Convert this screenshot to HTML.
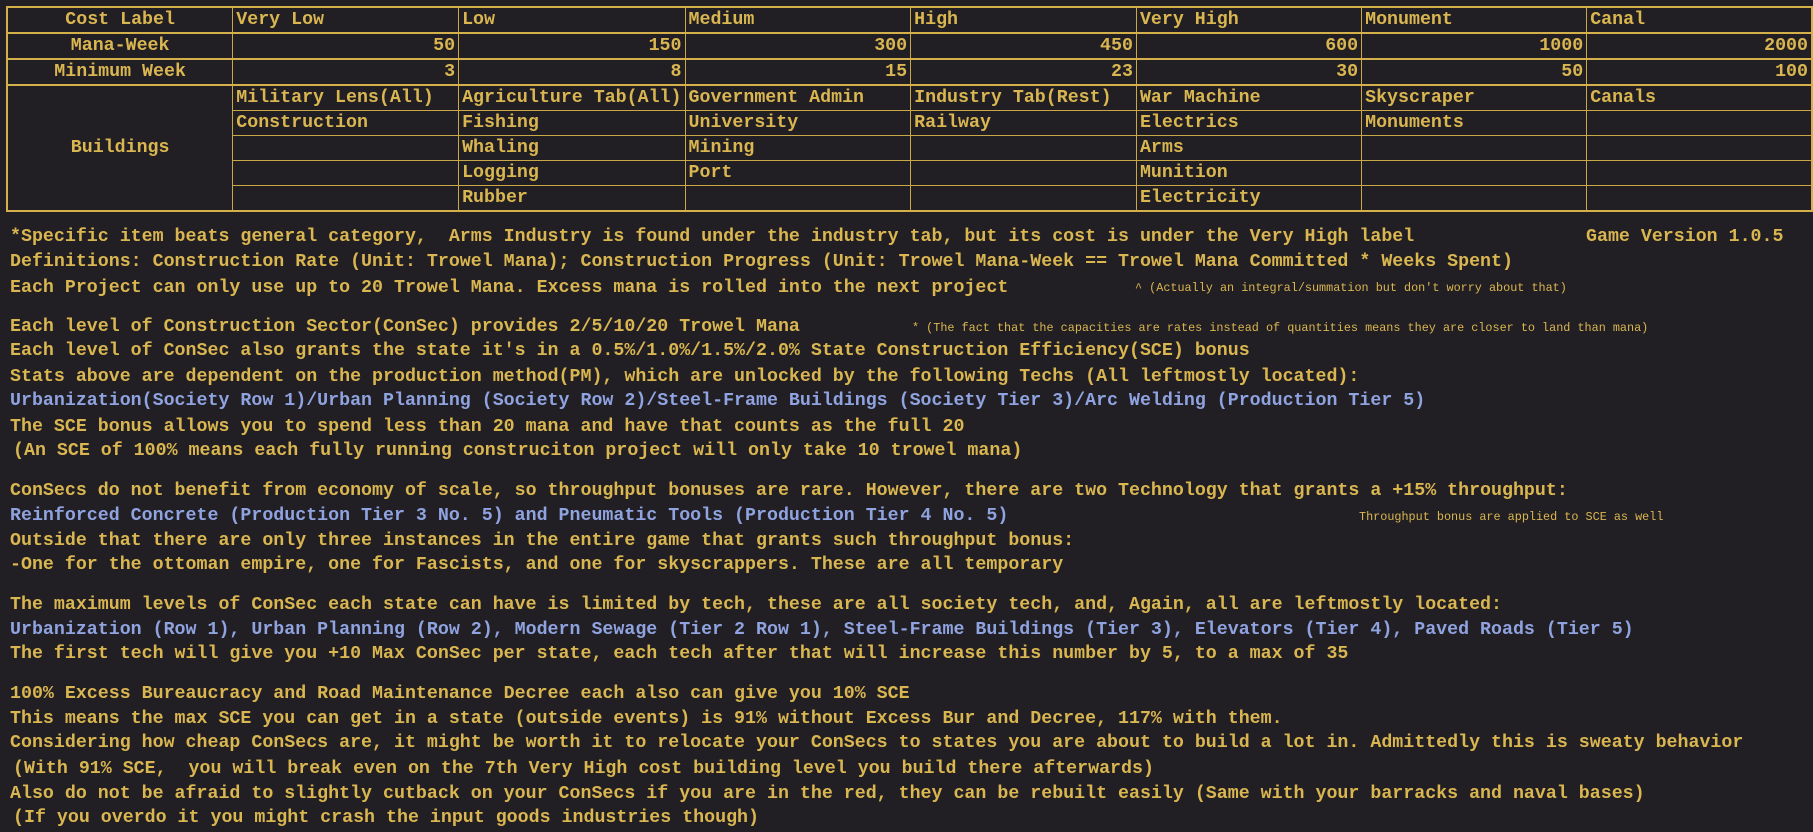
<!DOCTYPE html>
<html><head><meta charset="utf-8"><style>
html,body{margin:0;padding:0;background:#221f24;width:1813px;height:832px;overflow:hidden}
body{font-family:"Liberation Mono",monospace;font-weight:bold;color:#d9b650;font-size:18.3px;position:relative}
table{position:absolute;left:6px;top:6px;border-collapse:collapse;border:2px solid #d4b04a}
td{border:1px solid #c9a845;padding:0 3px;height:24px;line-height:22px;white-space:nowrap;width:219px;overflow:hidden}
tr.h td{border-bottom:2px solid #d4b04a;height:24px}
td.c{text-align:center}
td.r{text-align:right}
.l{position:absolute;left:10px;white-space:pre;line-height:25px}
.b{color:#8fa3e0}
.s{position:absolute;font-size:11.8px;font-weight:normal;white-space:pre;line-height:14px}
</style></head><body>
<table>
<tr class="h"><td class="c">Cost Label</td><td>Very Low</td><td>Low</td><td>Medium</td><td>High</td><td>Very High</td><td>Monument</td><td>Canal</td></tr>
<tr class="h"><td class="c">Mana-Week</td><td class="r">50</td><td class="r">150</td><td class="r">300</td><td class="r">450</td><td class="r">600</td><td class="r">1000</td><td class="r">2000</td></tr>
<tr class="h"><td class="c">Minimum Week</td><td class="r">3</td><td class="r">8</td><td class="r">15</td><td class="r">23</td><td class="r">30</td><td class="r">50</td><td class="r">100</td></tr>
<tr><td class="c" rowspan="5">Buildings</td><td>Military Lens(All)</td><td>Agriculture Tab(All)</td><td>Government Admin</td><td>Industry Tab(Rest)</td><td>War Machine</td><td>Skyscraper</td><td>Canals</td></tr>
<tr><td>Construction</td><td>Fishing</td><td>University</td><td>Railway</td><td>Electrics</td><td>Monuments</td><td></td></tr>
<tr><td></td><td>Whaling</td><td>Mining</td><td></td><td>Arms</td><td></td><td></td></tr>
<tr><td></td><td>Logging</td><td>Port</td><td></td><td>Munition</td><td></td><td></td></tr>
<tr><td></td><td>Rubber</td><td></td><td></td><td>Electricity</td><td></td><td></td></tr>
</table>

<div class="l" style="top:225px">*Specific item beats general category,  Arms Industry is found under the industry tab, but its cost is under the Very High label</div>
<div class="l" style="top:225px;left:1586px">Game Version 1.0.5</div>
<div class="l" style="top:250px">Definitions: Construction Rate (Unit: Trowel Mana); Construction Progress (Unit: Trowel Mana-Week == Trowel Mana Committed * Weeks Spent)</div>
<div class="l" style="top:276px">Each Project can only use up to 20 Trowel Mana. Excess mana is rolled into the next project</div>
<div class="s" style="top:281px;left:1135px">^ (Actually an integral/summation but don't worry about that)</div>

<div class="l" style="top:315px">Each level of Construction Sector(ConSec) provides 2/5/10/20 Trowel Mana</div>
<div class="s" style="top:321px;left:912px">* (The fact that the capacities are rates instead of quantities means they are closer to land than mana)</div>
<div class="l" style="top:339px">Each level of ConSec also grants the state it's in a 0.5%/1.0%/1.5%/2.0% State Construction Efficiency(SCE) bonus</div>
<div class="l" style="top:365px">Stats above are dependent on the production method(PM), which are unlocked by the following Techs (All leftmostly located):</div>
<div class="l b" style="top:389px">Urbanization(Society Row 1)/Urban Planning (Society Row 2)/Steel-Frame Buildings (Society Tier 3)/Arc Welding (Production Tier 5)</div>
<div class="l" style="top:415px">The SCE bonus allows you to spend less than 20 mana and have that counts as the full 20</div>
<div class="l" style="top:439px;left:13px">(An SCE of 100% means each fully running construciton project will only take 10 trowel mana)</div>

<div class="l" style="top:479px">ConSecs do not benefit from economy of scale, so throughput bonuses are rare. However, there are two Technology that grants a +15% throughput:</div>
<div class="l b" style="top:504px">Reinforced Concrete (Production Tier 3 No. 5) and Pneumatic Tools (Production Tier 4 No. 5)</div>
<div class="s" style="top:510px;left:1359px">Throughput bonus are applied to SCE as well</div>
<div class="l" style="top:529px">Outside that there are only three instances in the entire game that grants such throughput bonus:</div>
<div class="l" style="top:553px">-One for the ottoman empire, one for Fascists, and one for skyscrappers. These are all temporary</div>

<div class="l" style="top:593px">The maximum levels of ConSec each state can have is limited by tech, these are all society tech, and, Again, all are leftmostly located:</div>
<div class="l b" style="top:618px">Urbanization (Row 1), Urban Planning (Row 2), Modern Sewage (Tier 2 Row 1), Steel-Frame Buildings (Tier 3), Elevators (Tier 4), Paved Roads (Tier 5)</div>
<div class="l" style="top:642px">The first tech will give you +10 Max ConSec per state, each tech after that will increase this number by 5, to a max of 35</div>

<div class="l" style="top:682px">100% Excess Bureaucracy and Road Maintenance Decree each also can give you 10% SCE</div>
<div class="l" style="top:707px">This means the max SCE you can get in a state (outside events) is 91% without Excess Bur and Decree, 117% with them.</div>
<div class="l" style="top:731px">Considering how cheap ConSecs are, it might be worth it to relocate your ConSecs to states you are about to build a lot in. Admittedly this is sweaty behavior</div>
<div class="l" style="top:757px;left:13px">(With 91% SCE,  you will break even on the 7th Very High cost building level you build there afterwards)</div>
<div class="l" style="top:782px">Also do not be afraid to slightly cutback on your ConSecs if you are in the red, they can be rebuilt easily (Same with your barracks and naval bases)</div>
<div class="l" style="top:806px;left:13px">(If you overdo it you might crash the input goods industries though)</div>
</body></html>
